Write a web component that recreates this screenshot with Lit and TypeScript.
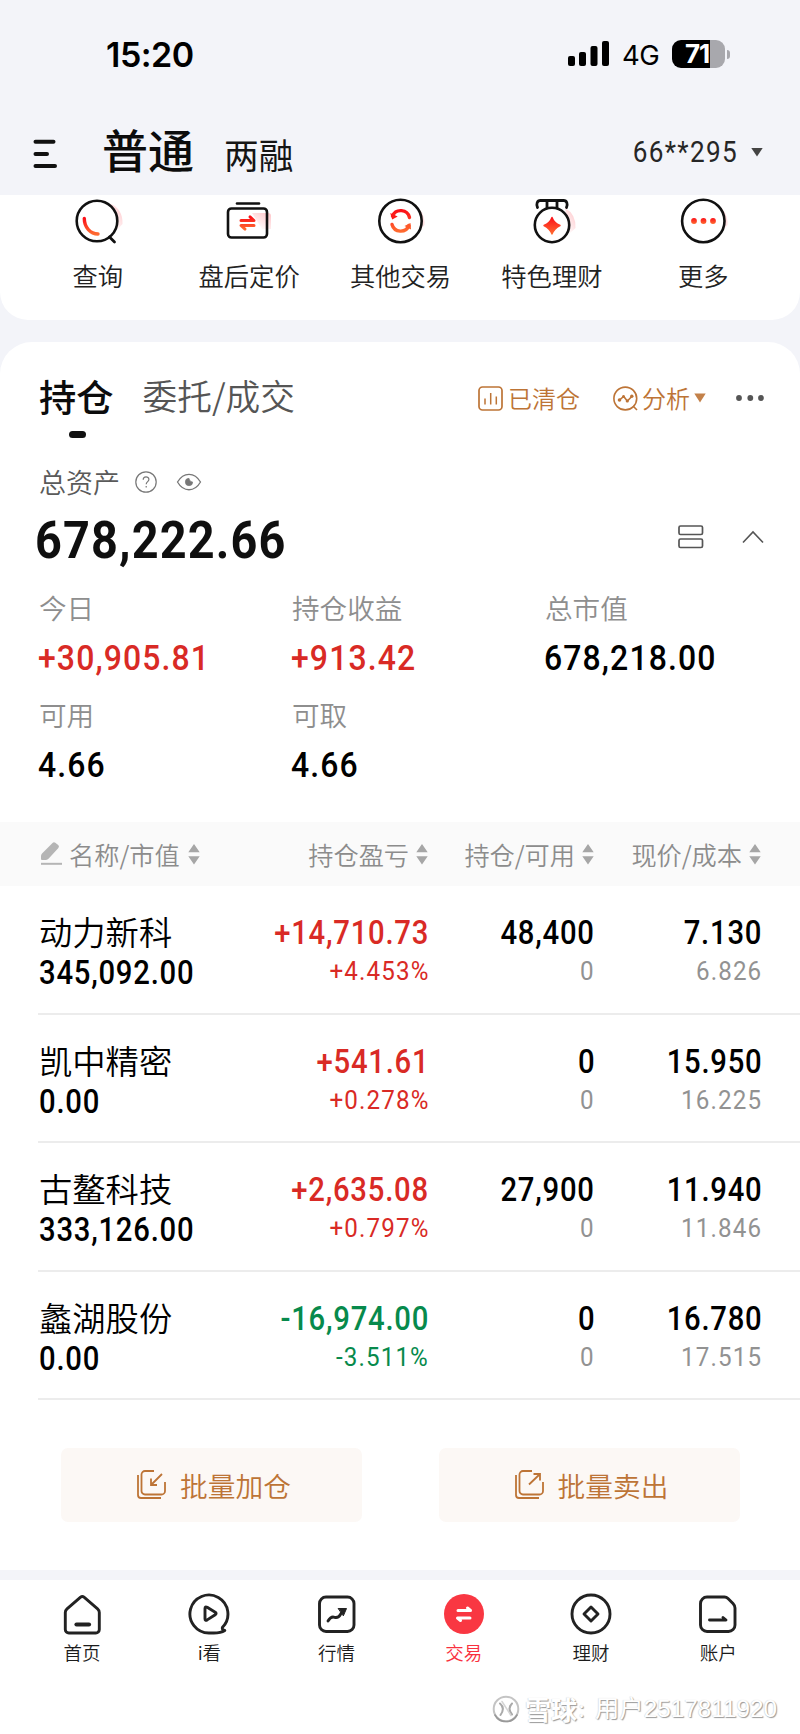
import { LitElement, html, css, svg } from "lit";
import { customElement } from "lit/decorators.js";

const ink = "#222";
const tan = "#bd7436";

const defs = svg`<defs>
  <linearGradient id="g" x1="0" y1="0" x2="0" y2="1"><stop offset="0" stop-color="#fb1018"/><stop offset="1" stop-color="#ff6a30"/></linearGradient>
  <linearGradient id="p" x1="1" y1="0" x2="0.3" y2="1"><stop offset="0" stop-color="#ffc4c8"/><stop offset="1" stop-color="#ffffff"/></linearGradient>
</defs>`;

const quickIcons: Record<string, unknown> = {
  search: svg`<path d="M37 7.500Q50 13 49.500 28L44 34z" fill="url(#p)"/><circle cx="24" cy="25" r="20.300" fill="#fff" stroke="#111" stroke-width="2.600"/><path d="M36.500 41l5 5" stroke="#111" stroke-width="2.800" stroke-linecap="round"/><path d="M11.300 22.500C11.300 31.500 17.500 37.800 25 38" fill="none" stroke="url(#g)" stroke-width="3.400" stroke-linecap="round"/>`,
  after: svg`<path d="M13 7.500h22" stroke="#111" stroke-width="2.600" stroke-linecap="round"/><path d="M28 17h16a3 3 0 0 1 3 3v13H38z" fill="url(#p)"/><rect x="4" y="12.500" width="39" height="29" rx="3.500" fill="none" stroke="#111" stroke-width="2.600"/><path d="M17 24.500h13l-4-3.600M30 29.500H17l4 3.600" fill="none" stroke="url(#g)" stroke-width="3" stroke-linecap="round" stroke-linejoin="round"/>`,
  cycle: svg`<path d="M38 8Q50 15 49.500 29L44 36z" fill="url(#p)"/><circle cx="25.500" cy="25" r="21.200" fill="#fff" stroke="#111" stroke-width="2.600"/><path d="M17.500 20a9 9 0 0 1 17 1.500M34 29.500a9 9 0 0 1-17-1" fill="none" stroke="url(#g)" stroke-width="3.400" stroke-linecap="round"/><path d="M15.200 17l2 6.500 5.500-3z" fill="#fb1a1a"/><path d="M36 33.500l-.500-6.500-6 3z" fill="#fd5a2a"/>`,
  wealth: svg`<path d="M38 12Q49 18 48.500 32L42 38z" fill="url(#p)"/><path d="M10.500 11.500c-1.500-3-.500-7 3-7h23c3.500 0 4.500 4 3 7M20 5v7M30 5v7" fill="none" stroke="#111" stroke-width="2.800" stroke-linecap="round"/><circle cx="25" cy="29" r="17.200" fill="#fff" stroke="#111" stroke-width="2.600"/><path d="M25 21.500q2 5.500 8 8q-6 3-8 8.500q-2-5.500-8-8.500q6-2.500 8-8z" fill="url(#g)" stroke="url(#g)" stroke-width="1.400" stroke-linejoin="round"/>`,
  more: svg`<path d="M38 8Q50 15 49.500 29L44 36z" fill="url(#p)"/><circle cx="25.300" cy="25" r="21.200" fill="#fff" stroke="#111" stroke-width="2.600"/><circle cx="16" cy="25" r="2.900" fill="url(#g)"/><circle cx="25.500" cy="25" r="2.900" fill="url(#g)"/><circle cx="35" cy="25" r="2.900" fill="url(#g)"/>`,
};

const navIcons: Record<string, unknown> = {
  home: svg`<path d="M19.600 4.200q1.700-1.400 3.400 0l13.600 11.600q1.700 1.500 1.700 3.700V36.500a3.500 3.500 0 0 1-3.500 3.500H7.800A3.500 3.500 0 0 1 4.300 36.500V19.500q0-2.200 1.700-3.700z"/><path d="M15.500 31.500h12.500" stroke-width="4.200"/>`,
  watch: svg`<path d="M34.500 34.300c-.6 1.600.2 2.800 2.300 3.200c-3 1.900-7 2.500-11 2.500H21A19 19 0 1 1 34.500 34.300z"/><path d="M17 15.500q0-2.500 2.200-1.200l8 5q1.800 1.200 0 2.400l-8 5.200q-2.200 1.200-2.200-1.200z"/>`,
  market: svg`<rect x="3.500" y="4" width="34.500" height="34.500" rx="6.500"/><path d="M12 28q3-5 6.500-3.700q4 1 6-3l1.500-2.300"/><path d="M22.500 15.500H30.500L27.500 22.500z" fill="#222" stroke-width="1"/>`,
  fund: svg`<circle cx="21" cy="21" r="19"/><path d="M21 14l7 7l-7 7l-7-7z"/>`,
  account: svg`<path d="M10 4H27.500q2 0 3.500 1.500l5 5q2 2 2 4.500V32a6.500 6.500 0 0 1-6.500 6.500H10A6.500 6.500 0 0 1 3.500 32V10.500A6.500 6.500 0 0 1 10 4z"/><path d="M12.500 27h16.500l-3-2.500"/>`,
};

const quick = [
  ["search", "查询"], ["after", "盘后定价"], ["cycle", "其他交易"], ["wealth", "特色理财"], ["more", "更多"],
];
const stats = [
  ["今日", "+30,905.81", "up"], ["持仓收益", "+913.42", "up"], ["总市值", "678,218.00", ""],
  ["可用", "4.66", ""], ["可取", "4.66", ""],
];
const heads = ["名称/市值", "持仓盈亏", "持仓/可用", "现价/成本"];
const rows = [
  ["动力新科", "345,092.00", "+14,710.73", "+4.453%", "48,400", "0", "7.130", "6.826"],
  ["凯中精密", "0.00", "+541.61", "+0.278%", "0", "0", "15.950", "16.225"],
  ["古鳌科技", "333,126.00", "+2,635.08", "+0.797%", "27,900", "0", "11.940", "11.846"],
  ["蠡湖股份", "0.00", "-16,974.00", "-3.511%", "0", "0", "16.780", "17.515"],
];
const tabs = [["home", "首页"], ["watch", "i看"], ["market", "行情"], ["trade", "交易"], ["fund", "理财"], ["account", "账户"]];

@customElement("app-root")
export class AppRoot extends LitElement {
  static styles = css`
    :host { display: block; width: 800px; height: 1734px; overflow: hidden; background: #fff; color: #0c0c0c;
      font-family: "Noto Sans CJK SC", sans-serif; font-weight: 350; }
    * { box-sizing: border-box; }
    svg { display: block; flex: none; }
    .top { height: 195px; background: #f3f4f9; }
    .status { height: 108px; padding: 0 70px 0 106px; display: flex; align-items: center; font-family: Inter, sans-serif; color: #000; }
    .time { font-size: 34px; font-weight: 600; letter-spacing: -0.500px; flex: 1; }
    .net { font-size: 27.500px; font-weight: 400; letter-spacing: -0.700px; margin: 2px 13px 0 13px; }
    .battery { width: 53px; height: 28px; border-radius: 9px; background: linear-gradient(90deg, #000 38px, #a8a8ad 38px);
      color: #fff; font-weight: 700; font-size: 26px; line-height: 28px; padding-left: 13px; letter-spacing: -1px; }
    .nub { width: 3px; height: 9px; margin-left: 2px; border-radius: 0 4px 4px 0; background: #a8a8ad; }
    .header { height: 87px; padding: 0 37px 0 33px; display: flex; align-items: center; }
    .menu { margin-top: 4px; }
    .main { font-size: 46px; font-weight: 500; line-height: 60px; margin: -8px 0 0 45px; color: #0c0c0c; }
    .sub { font-size: 34.700px; line-height: 50px; margin: 5px 0 0 30px; flex: 1; color: #151515; font-weight: 400; }
    .acct { font-family: Roboto, sans-serif; font-weight: 400; font-size: 29px; line-height: 40px; margin-right: 13px; color: #262626;
      letter-spacing: 1.500px; transform: scaleX(0.9); transform-origin: right; }
    .quick { height: 125px; padding: 1px 21px 0 22px; display: grid; grid-template-columns: repeat(5, 1fr); justify-items: center;
      background: #fff; border-radius: 0 0 28px 28px; }
    .qi { display: flex; flex-direction: column; align-items: center; font-size: 25.300px; line-height: 36px; color: #222; gap: 10px; }
    .mid { background: #f3f4f9; }
    .gap { height: 22px; }
    .panel { background: #fff; border-radius: 32px 32px 0 0; height: 480px; padding: 0 36px 0 39px; }
    .tabs { height: 96px; display: flex; align-items: flex-start; padding-top: 26px; }
    .tab { display: flex; flex-direction: column; align-items: center; font-size: 37.300px; line-height: 56px; font-weight: 500; }
    .dash { width: 17px; height: 7px; border-radius: 3.500px; background: #111; margin: 7px 0 0 2px; }
    .tab2 { font-size: 34.700px; line-height: 55px; margin-left: 29px; color: #555; flex: 1; }
    .tool { display: flex; align-items: center; font-size: 24px; line-height: 60px; color: #bd7436; gap: 5px; }
    .tool.second { margin: 0 30px 0 33px; gap: 4px; }
    .dots { margin-top: 26px; }
    .asset { height: 44px; margin-top: 21px; display: flex; align-items: center; font-size: 27px; color: #5a5a5a; }
    .q { margin: 2px 0 0 15px; } .eye { margin: 2px 0 0 19px; }
    .sumrow { height: 73px; display: flex; align-items: center; }
    .sum { font: 700 52px/74px Roboto, sans-serif; letter-spacing: 1.300px; margin-left: -4px; color: #0f0f0f;
      transform: scaleX(0.9); transform-origin: left; padding-top: 2px; }
    .grow { flex: 1; }
    .list { margin-top: -6px; }
    .chev { margin: -6px 0 0 38px; }
    .stats { display: grid; grid-template-columns: 253px 253px 1fr; grid-auto-rows: 107px; padding-top: 11px; }
    .sl { font-size: 27.600px; line-height: 40px; color: #8e8e8e; }
    .sv { font: 500 35.500px/50px Roboto, sans-serif; margin: 6px 0 0 -1px; letter-spacing: 1.250px; color: #000;
      transform: scaleX(0.9); transform-origin: left; white-space: nowrap; }
    .thead, .row { display: grid; grid-template-columns: 190px 199px 166px 167px; padding-left: 39px; }
    .thead { height: 64px; background: #fafafa; color: #8c8c8c; font-size: 25.200px; align-items: center; }
    .th { display: flex; align-items: center; justify-content: flex-end; gap: 7px; white-space: nowrap; }
    .th.first { justify-content: flex-start; gap: 8px; }
    .pen { margin-right: -2px; }
    .row { height: 128.500px; padding: 26px 0 0 0; margin-left: 38px; border-bottom: 2px solid #ececec; grid-template-columns: 191px 200px 166px 167px; }
    .cell { display: flex; flex-direction: column; align-items: flex-end; }
    .cell.first { align-items: flex-start; padding-left: 1px; }
    .name { font-size: 33.300px; line-height: 42px; margin: -2px 0 1px; white-space: nowrap; color: #000; }
    .num { font: 500 32.500px/42px Roboto, sans-serif; letter-spacing: 0.850px; color: #000; transform: scaleX(0.9); transform-origin: right; }
    .first .num { transform-origin: left; margin-top: -1px; }
    .small { font: 400 26px/34px Roboto, sans-serif; letter-spacing: 1.200px; color: #929292; transform: scaleX(0.93); transform-origin: right; }
    .up { color: #d92a25; } .down { color: #078a4c; }
    .btns { height: 170px; padding: 47.500px 60.500px 0 61px; display: flex; justify-content: space-between; }
    .btn { width: 301px; height: 74px; border-radius: 7px; background: #fcf8f5; display: flex; align-items: center; justify-content: center;
      gap: 14px; font-size: 27.700px; color: #bd7436; padding-left: 5px; }
    .band { height: 10px; background: #f3f4f9; }
    .nav { height: 101px; padding: 13px 18px 0 18.500px; display: grid; grid-template-columns: repeat(6, 1fr); }
    .ni { display: flex; flex-direction: column; align-items: center; gap: 3px; font-size: 18.500px; line-height: 28px; color: #1c1c1c; }
    .ni.on { color: #f9303e; }
    .mark { display: flex; align-items: center; justify-content: flex-end; padding-right: 23px; height: 56px; font-size: 24px; font-weight: 400;
      color: #fff; text-shadow: 1px 1px 1px #999, -0.5px -0.5px 1px #d5d5d5; white-space: pre; line-height: 32px; }
    .brand { font-weight: 700; font-size: 26px; margin-left: 5px; }
    .colon { font-size: 18px; }
    .id { font-family: "Liberation Sans", "Noto Sans CJK SC", sans-serif; font-size: 24.300px; }
  `;

  private sort() {
    return html`<svg width="12" height="22" viewBox="0 0 12 22"><path d="M6 1l5.700 8.300H.3zM6 21.500l5.700-8.300H.3z" fill="#a6a6a6"/></svg>`;
  }

  render() {
    return html`
      <div class="top">
        <div class="status">
          <span class="time">15:20</span>
          <svg width="41" height="26" viewBox="0 0 41 26"><rect x="0" y="15" width="7" height="10" rx="2"/><rect x="11" y="11" width="7" height="14" rx="2"/><rect x="22.500" y="5" width="7" height="20" rx="2"/><rect x="34" y="0" width="7" height="25" rx="2"/></svg>
          <span class="net">4G</span>
          <div class="battery">71</div><div class="nub"></div>
        </div>
        <div class="header">
          <svg class="menu" width="24" height="30" viewBox="0 0 24 30" stroke="#111" stroke-width="4" stroke-linecap="round"><path d="M2.500 2.700h18M2.500 15h11.500M2.500 27h19.500"/></svg>
          <span class="main">普通</span><span class="sub">两融</span>
          <span class="acct">66**295</span>
          <svg width="12" height="10" viewBox="0 0 12 10"><path d="M0.300 1h11.400l-5.700 8.500z" fill="#444"/></svg>
        </div>
      </div>
      <div class="mid">
        <div class="quick">
          ${quick.map(([k, t]) => html`<div class="qi"><svg width="52" height="51" viewBox="-1 0 52 51">${defs}${quickIcons[k]}</svg><span>${t}</span></div>`)}
        </div>
        <div class="gap"></div>
        <div class="panel">
          <div class="tabs">
            <div class="tab">持仓<div class="dash"></div></div>
            <div class="tab2">委托/成交</div>
            <div class="tool">
              <svg width="25" height="25" viewBox="0 0 25 25" fill="none" stroke=${tan} stroke-width="1.700"><rect x="1" y="1" width="23" height="23" rx="3.500"/><path d="M7 12.500v6M12.700 7v11.500M18.300 10.500v8" stroke-width="1.500"/></svg>
              <span>已清仓</span>
            </div>
            <div class="tool second">
              <svg width="25" height="25" viewBox="0 0 25 25" fill="none" stroke=${tan} stroke-width="1.600"><circle cx="12.300" cy="12.500" r="11.400"/><path d="M20 20l4 4M6.500 14l4.200-3.500 3.600 4.500 4.500-4.500"/><g fill=${tan} stroke="none"><circle cx="6.500" cy="14" r="1.800"/><circle cx="10.500" cy="10.500" r="1.500"/><circle cx="14.300" cy="15" r="1.600"/><circle cx="18.800" cy="10.200" r="1.700"/></g></svg>
              <span>分析</span>
              <svg width="12" height="10" viewBox="0 0 12 10"><path d="M0.300 0.500h11.400L6 9.500z" fill="#c3814a"/></svg>
            </div>
            <svg class="dots" width="28" height="8" viewBox="0 0 28 8" fill="#555"><circle cx="3" cy="4" r="2.900"/><circle cx="14.300" cy="4" r="2.900"/><circle cx="25" cy="4" r="2.900"/></svg>
          </div>
          <div class="asset">总资产
            <svg class="q" width="22" height="22" viewBox="0 0 22 22" fill="none" stroke="#777" stroke-width="1.200"><circle cx="11" cy="11" r="10.200"/><path d="M8.200 8.800c0-4 5.700-3.800 5.700-.3c0 2-2.700 2.300-2.700 4.700M11.200 15v1.500"/></svg>
            <svg class="eye" width="26" height="20" viewBox="0 0 26 20" fill="none" stroke="#777" stroke-width="1.300"><path d="M1.500 10C7.500-.300 18.500-.300 24.500 10C18.500 20.300 7.500 20.300 1.500 10z"/><path d="M13 6.300A3.700 3.700 0 1 0 16.700 10Q13.500 10 13 6.300z" fill="#777" stroke="#777" stroke-width=".6"/></svg>
          </div>
          <div class="sumrow">
            <span class="sum">678,222.66</span><span class="grow"></span>
            <svg class="list" width="26" height="24" viewBox="0 0 26 24" fill="none" stroke="#555" stroke-width="1.700"><rect x="1" y="1" width="23.500" height="8.500" rx="1.500"/><rect x="1" y="14" width="23.500" height="8.500" rx="1.500"/></svg>
            <svg class="chev" width="22" height="14" viewBox="0 0 22 14" fill="none" stroke="#555" stroke-width="1.600"><path d="M1 12.500L11 2l10 10.500"/></svg>
          </div>
          <div class="stats">
            ${stats.map(([l, v, c]) => html`<div><div class="sl">${l}</div><div class="sv ${c}">${v}</div></div>`)}
          </div>
        </div>
      </div>
      <div class="thead">
        ${heads.map((h, i) => html`<div class="th ${i ? "" : "first"}">
          ${i ? "" : html`<svg class="pen" width="24" height="26" viewBox="0 0 24 26"><path d="M13.500 2q1.300-1.500 2.800-.3l2.900 2.400q1.500 1.300.2 2.800L9.500 17.800q-1 1.100-2.500 1.100H3q-1 0-1-1v-3q0-1.400 1-2.500z" fill="#b5b5b5"/><path d="M2 22.800h21" stroke="#b5b5b5" stroke-width="2"/></svg>`}
          <span>${h}</span>${this.sort()}</div>`)}
      </div>
      ${rows.map((r) => {
        const c = r[2].startsWith("+") ? "up" : "down";
        return html`<div class="row">
          <div class="cell first"><span class="name">${r[0]}</span><span class="num">${r[1]}</span></div>
          <div class="cell"><span class="num ${c}">${r[2]}</span><span class="small ${c}">${r[3]}</span></div>
          <div class="cell"><span class="num">${r[4]}</span><span class="small">${r[5]}</span></div>
          <div class="cell"><span class="num">${r[6]}</span><span class="small">${r[7]}</span></div>
        </div>`;
      })}
      <div class="btns">
        ${[["批量加仓", "M25 4L14.500 14.500M14 8.500v6.500h6"], ["批量卖出", "M14 14.500L25 4M18.500 4h6.500v6.500"]].map(([t, d]) => html`<div class="btn">
          <svg width="29" height="29" viewBox="0 0 29 29" fill="none" stroke=${tan} stroke-width="1.800"><path d="M17 1H8a3.500 3.500 0 0 0-3.500 3.500V21A3.500 3.500 0 0 0 8 24.500H24.500A3.500 3.500 0 0 0 28 21V12M1 5V25a3 3 0 0 0 3 3H24"/><path d=${d}/></svg>
          <span>${t}</span></div>`)}
      </div>
      <div class="band"></div>
      <div class="nav">
        ${tabs.map(([k, t]) => html`<div class="ni ${k === "trade" ? "on" : ""}">
          ${k === "trade"
            ? html`<svg width="42" height="42" viewBox="0 0 42 42"><circle cx="21" cy="21" r="20" fill="#f93742"/><path d="M15 17.500h12.500l-3-2.500M27 25H14.500l3 2.500" fill="none" stroke="#fff" stroke-width="3" stroke-linecap="round" stroke-linejoin="round"/></svg>`
            : html`<svg width="42" height="42" viewBox="0 0 42 42" fill="none" stroke=${ink} stroke-width="2.900" stroke-linecap="round" stroke-linejoin="round">${navIcons[k]}</svg>`}
          <span>${t}</span></div>`)}
      </div>
      <div class="mark">
        <svg width="28" height="28" viewBox="0 0 28 28" fill="none" stroke-linecap="round"><circle cx="14" cy="14" r="12.300" stroke="#c4c4c4" stroke-width="2"/><path d="M3 20a12.500 12.500 0 0 0 22 0" stroke="#999" stroke-width="1.600"/><path d="M8 8.500q5.500 4.500.500 11.500M20 8.500q-5 5 0 11" stroke="#aaa" stroke-width="2"/><path d="M10 6.500l9 14" stroke="#d5d5d5" stroke-width="1.500"/></svg>
        <span class="brand">雪球</span><span class="colon">：</span><span class="id">用户2517811920</span>
      </div>
    `;
  }
}
